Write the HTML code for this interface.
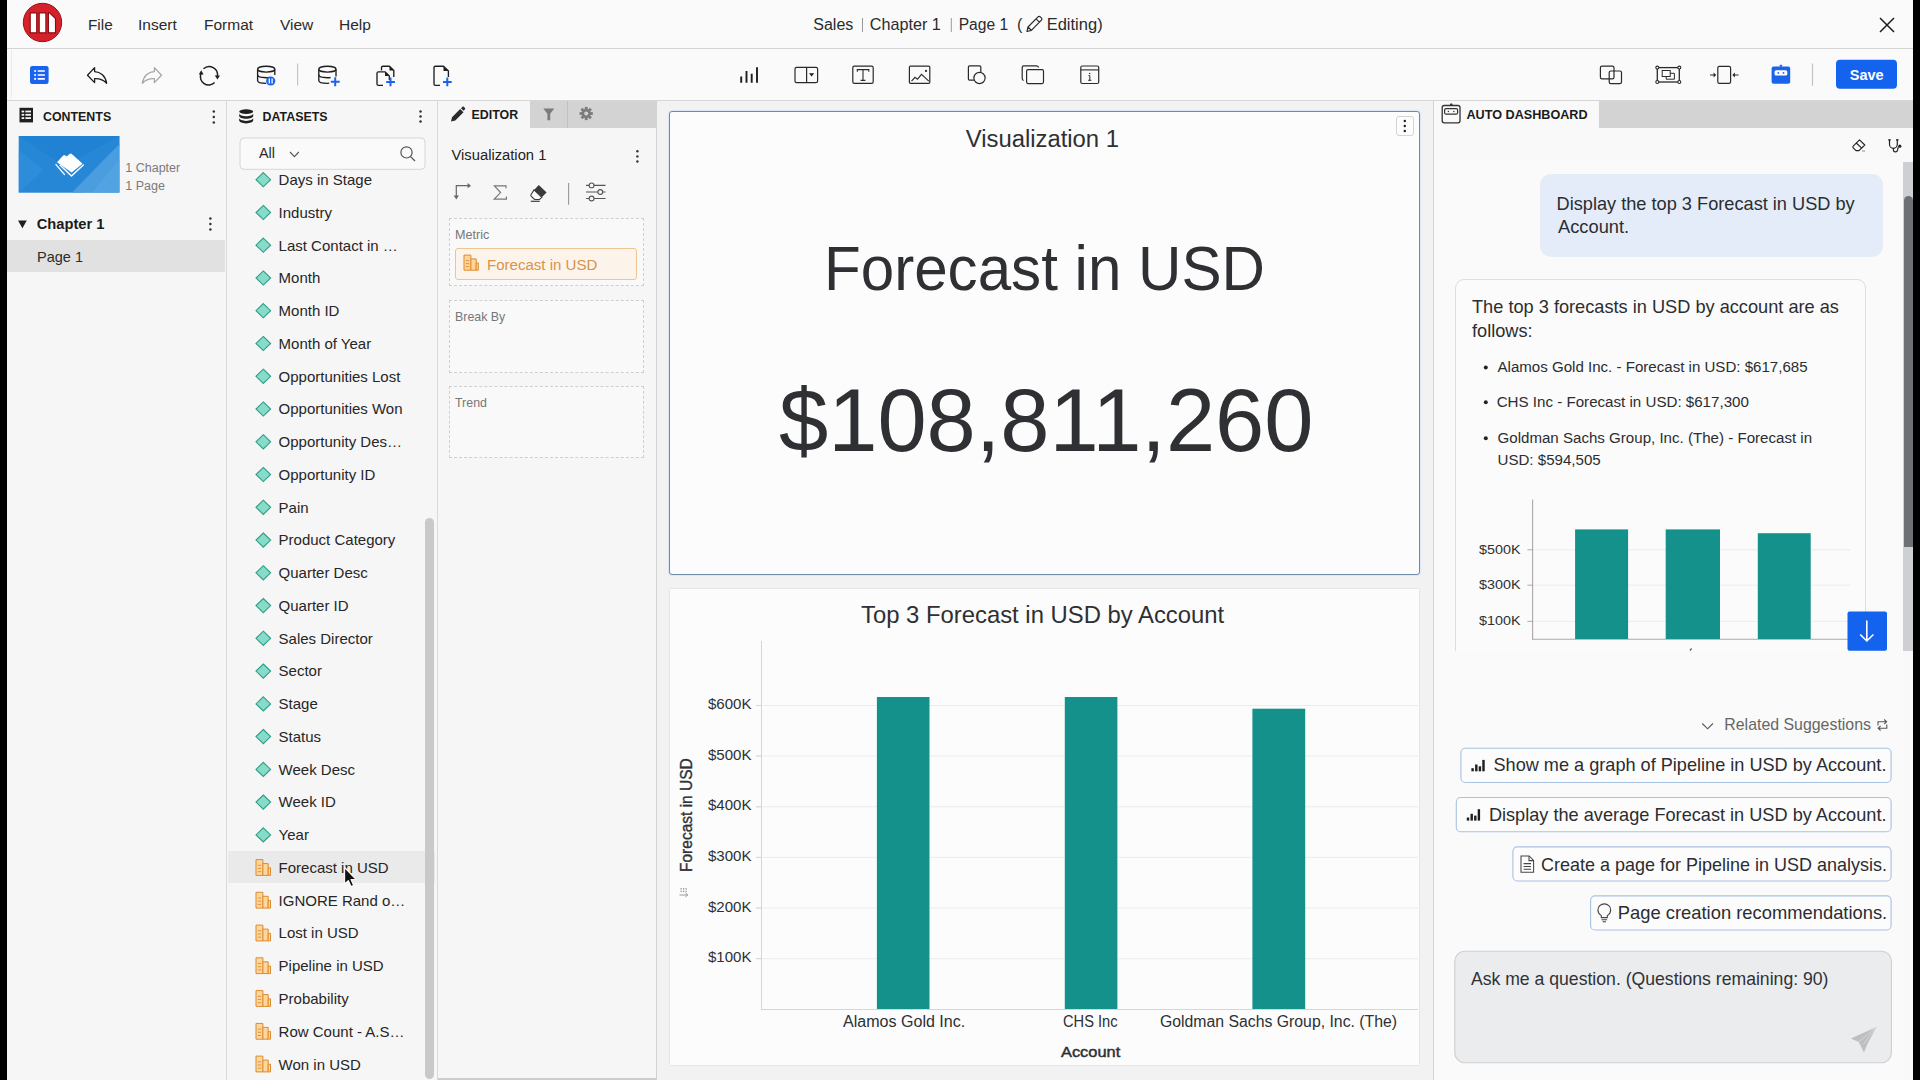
<!DOCTYPE html>
<html><head><meta charset="utf-8">
<style>
*{box-sizing:border-box;margin:0;padding:0}
html,body{width:1920px;height:1080px;overflow:hidden;background:#f3f3f3;font-family:"Liberation Sans",sans-serif;color:#222;position:relative}
.a{position:absolute;white-space:nowrap}
.t{position:absolute;white-space:nowrap;line-height:1}
svg.a{overflow:visible}
</style></head>
<body>
<!-- header -->
<div class="a" style="left:0;top:0;width:1920px;height:49px;background:#fafafa;border-bottom:1px solid #d5d5d5"></div>
<!-- toolbar -->
<div class="a" style="left:0;top:49px;width:1920px;height:52px;background:#fafafa;border-bottom:1px solid #d6d6d6;box-shadow:0 1px 2px rgba(0,0,0,.08)"></div><div class="a" style="left:10.5px;top:50px;width:1px;height:49px;background:#ececec"></div>
<!-- panels -->
<div class="a" style="left:0;top:101px;width:227px;height:979px;background:#f6f6f6;border-right:1px solid #dadada"></div>
<div class="a" style="left:227px;top:101px;width:211px;height:979px;background:#f6f6f6;border-right:1px solid #dadada"></div>
<div class="a" style="left:438px;top:101px;width:219px;height:979px;background:#f6f6f6;border-right:1.5px solid #d2d2d2"></div>
<div class="a" style="left:1433px;top:101px;width:480px;height:979px;background:#f9f9f9;border-left:1px solid #d4d4d4"></div>
<div class="t" style="left:88px;top:17px;font-size:15.3px;color:#2b2b2b">File</div>
<div class="t" style="left:138px;top:17px;font-size:15.5px;color:#2b2b2b">Insert</div>
<div class="t" style="left:204px;top:17px;font-size:15.5px;color:#2b2b2b">Format</div>
<div class="t" style="left:280px;top:17px;font-size:15.5px;color:#2b2b2b">View</div>
<div class="t" style="left:339px;top:17px;font-size:15.5px;color:#2b2b2b">Help</div>
<div class="t" style="left:813.3px;top:17px;font-size:16px;color:#2b2b2b">Sales</div>
<div class="t" style="left:869.7px;top:16px;font-size:16.2px;color:#2b2b2b">Chapter 1</div>
<div class="t" style="left:958.7px;top:17px;font-size:15.6px;color:#2b2b2b">Page 1</div>
<div class="t" style="left:1017px;top:17px;font-size:16px;color:#2b2b2b">(</div>
<div class="t" style="left:1046.7px;top:16px;font-size:16.5px;color:#2b2b2b">Editing)</div>
<svg class="a" style="left:0;top:0" width="1920" height="100">
  <circle cx="42.5" cy="22.5" r="19.2" fill="#d7212a" stroke="#9a1016" stroke-width="1"/>
  <g fill="#fff" stroke="#8a0c12" stroke-width="1.15" stroke-linejoin="miter">
   <path d="M30.2 12.9H36.7V32.8H30.2Z"/><path d="M39.2 12.9H45.9V32.8H39.2Z"/><path d="M48.4 12.9H49.6L55.5 18.6V32.8H48.4Z"/>
  </g>
  <path d="M1880 18L1894 32M1894 18L1880 32" stroke="#1e1e1e" stroke-width="1.5"/>
  <line x1="862.5" y1="18" x2="862.5" y2="32" stroke="#9a9a9a" stroke-width="1"/>
  <line x1="951.3" y1="18" x2="951.3" y2="32" stroke="#9a9a9a" stroke-width="1"/>
  <g fill="none" stroke="#2b2b2b" stroke-width="1.2" stroke-linejoin="round">
    <path d="M1027 31.5l1-4.5l10-10.2a1.6 1.6 0 0 1 2.3 0l1.1 1.1a1.6 1.6 0 0 1 0 2.3l-10 10.2z M1036 18.8l3.4 3.4 M1028 27l3.5 3.5"/>
  </g>
</svg>
<svg class="a" style="left:0;top:0" width="1920" height="100">
 <!-- blue list -->
 <rect x="30" y="66" width="18.6" height="18" rx="2.2" fill="#1a63ee"/>
 <g fill="#fff"><circle cx="35.1" cy="71" r="1.05"/><circle cx="35.1" cy="75" r="1.05"/><circle cx="35.1" cy="78.9" r="1.05"/></g>
 <g stroke="#fff" stroke-width="1.6" stroke-linecap="round"><path d="M38.3 71H44.3M38.3 75H44.3M38.3 78.9H44.3"/></g>
 <!-- undo -->
 <path d="M87.5 75.2L94.6 67.6V71.6C100.5 71.8 105.6 76 106.6 83.4C103.3 79.4 99.6 78.4 94.6 78.6V82.6Z" fill="none" stroke="#1e1e1e" stroke-width="1.3" stroke-linejoin="round"/>
 <!-- redo -->
 <path d="M161.5 75.2L154.4 67.6V71.6C148.5 71.8 143.4 76 142.4 83.4C145.7 79.4 149.4 78.4 154.4 78.6V82.6Z" fill="none" stroke="#a8a8a8" stroke-width="1.3" stroke-linejoin="round"/>
 <!-- refresh -->
 <g fill="none" stroke="#1e1e1e" stroke-width="1.5">
  <path d="M203.5 68.8A8.3 8.3 0 0 1 217.3 76.5"/>
  <path d="M214.6 82.5A8.3 8.3 0 0 1 201 73.5"/>
 </g>
 <path d="M214.8 75.5L220 75.5L217.4 79.5Z" fill="#1e1e1e"/>
 <path d="M198.8 74.5L203.6 74.5L201.2 70.3Z" fill="#1e1e1e"/>
 <!-- db info -->
 <g fill="none" stroke="#1e1e1e" stroke-width="1.35">
  <ellipse cx="266.2" cy="69.2" rx="8.6" ry="2.9"/>
  <path d="M257.6 69.2V80.4C257.6 82 261 83.3 266.2 83.3"/>
  <path d="M274.8 69.2V75"/>
  <path d="M257.6 74.8C257.6 76.4 261 77.7 266.2 77.7C267.5 77.7 268.6 77.6 269.5 77.4"/>
 </g>
 <circle cx="270.7" cy="81" r="4.6" fill="#1a63ee"/>
 <g stroke="#fff" stroke-width="1.3"><path d="M269.3 78.5V83.5M272.1 78.5V83.5"/></g>
 <line x1="297.6" y1="63.5" x2="297.6" y2="85.5" stroke="#c4c4c4" stroke-width="1.2"/>
 <!-- db plus -->
 <g fill="none" stroke="#1e1e1e" stroke-width="1.35">
  <ellipse cx="327.4" cy="69.2" rx="8.6" ry="2.9"/>
  <path d="M318.8 69.2V80.4C318.8 82 322.2 83.3 327.4 83.3C328 83.3 328.6 83.3 329.2 83.2"/>
  <path d="M336 69.2V76.5"/>
  <path d="M318.8 74.8C318.8 76.4 322.2 77.7 327.4 77.7C328.6 77.7 329.7 77.6 330.6 77.5"/>
 </g>
 <g stroke="#1a63ee" stroke-width="2"><path d="M335.2 77.3V86.3M330.8 81.8H339.7"/></g>
 <!-- copy plus -->
 <g fill="none" stroke="#1e1e1e" stroke-width="1.35" stroke-linejoin="round">
  <path d="M381.5 70.5V67.6C381.5 66.8 382.1 66.2 382.9 66.2H389.5L393.8 70.5V77"/>
  <path d="M377 84V73.2C377 72.4 377.6 71.8 378.4 71.8H385L389.3 76.1V80"/>
  <path d="M377 84C377 84.8 377.6 85.4 378.4 85.4H383"/>
 </g>
 <path d="M385 71.8L389.3 76.1H385Z M389.5 66.2L393.8 70.5H389.5Z" fill="#1e1e1e"/>
 <g stroke="#1a63ee" stroke-width="2"><path d="M390.5 77.5V86.3M386.2 81.9H394.9"/></g>
 <!-- page plus -->
 <g fill="none" stroke="#1e1e1e" stroke-width="1.35" stroke-linejoin="round">
  <path d="M434 84V67.6C434 66.8 434.6 66.2 435.4 66.2H443.5L448.4 71.1V77"/>
  <path d="M434 84C434 84.8 434.6 85.4 435.4 85.4H440"/>
 </g>
 <path d="M443.5 66.2L448.4 71.1H443.5Z" fill="#1e1e1e"/>
 <g stroke="#1a63ee" stroke-width="2"><path d="M447.3 77.5V86.3M443 81.9H451.7"/></g>

 <!-- center: bars -->
 <g stroke="#1e1e1e" stroke-width="1.9"><path d="M741.2 76.4V82.8M746.5 71V82.8M751.7 73.8V82.8M757 67.2V82.8"/></g>
 <!-- panel dropdown -->
 <rect x="795" y="67.4" width="22.6" height="15.3" rx="1.6" fill="none" stroke="#2a2a2a" stroke-width="1.2"/>
 <line x1="806.6" y1="67.4" x2="806.6" y2="82.7" stroke="#2a2a2a" stroke-width="1.2"/>
 <path d="M809 73.3h5.2l-2.6 3.3z" fill="#1e1e1e"/>
 <!-- T box -->
 <rect x="852.8" y="66.1" width="20.4" height="17.3" rx="1.6" fill="none" stroke="#2a2a2a" stroke-width="1.2"/>
 <path d="M857.3 71.8V69.6H868.8V71.8M863 69.6V80.4M860.6 80.4H865.4" fill="none" stroke="#2a2a2a" stroke-width="1.1"/>
 <!-- image -->
 <rect x="909.4" y="66.1" width="20.4" height="17.3" rx="1.2" fill="none" stroke="#2a2a2a" stroke-width="1.2"/>
 <path d="M911.5 81.2L915 77.3L917.5 79.2L921.5 74.4L928.8 81.2" fill="none" stroke="#2a2a2a" stroke-width="1.1"/>
 <circle cx="926" cy="70.9" r="1.1" fill="#2a2a2a"/>
 <!-- shape -->
 <path d="M974.5 80.2H969.6C968.9 80.2 968.4 79.7 968.4 79V67C968.4 66.3 968.9 65.8 969.6 65.8H979.6C980.3 65.8 980.8 66.3 980.8 67V72.4" fill="none" stroke="#2a2a2a" stroke-width="1.2"/>
 <circle cx="979.5" cy="78" r="5.6" fill="#fafafa" stroke="#2a2a2a" stroke-width="1.2"/>
 <!-- duplicate -->
 <path d="M1023.6 80.5C1022.6 80 1022.2 79.3 1022.2 78.4V67.4C1022.2 66.5 1022.9 65.8 1023.8 65.8H1036.4C1037.3 65.8 1038.2 66.5 1038.8 67.4" fill="none" stroke="#2a2a2a" stroke-width="1.2"/>
 <rect x="1026.6" y="69.6" width="16.9" height="14" rx="1.5" fill="none" stroke="#2a2a2a" stroke-width="1.2"/>
 <!-- info -->
 <rect x="1080.8" y="66" width="17.9" height="17.5" rx="1.5" fill="none" stroke="#2a2a2a" stroke-width="1.2"/>
 <line x1="1080.8" y1="69.9" x2="1098.7" y2="69.9" stroke="#2a2a2a" stroke-width="1.1"/>
 <circle cx="1089.7" cy="73.5" r="0.75" fill="#2a2a2a"/>
 <path d="M1088.5 75.6H1089.8V80.3M1088.2 80.3H1091.3" fill="none" stroke="#2a2a2a" stroke-width="1"/>

 <!-- right: overlap squares -->
 <rect x="1600.4" y="66.2" width="13.6" height="12.6" rx="1.6" fill="none" stroke="#2a2a2a" stroke-width="1.2"/>
 <rect x="1609.2" y="71" width="12.3" height="12.6" rx="1.6" fill="none" stroke="#2a2a2a" stroke-width="1.2"/>
 <!-- frame -->
 <rect x="1657.3" y="67.6" width="22" height="14.4" fill="none" stroke="#2a2a2a" stroke-width="1.3"/>
 <g fill="#fafafa" stroke="#2a2a2a" stroke-width="1.1"><circle cx="1657.3" cy="67.6" r="1.5"/><circle cx="1679.3" cy="67.6" r="1.5"/><circle cx="1657.3" cy="82" r="1.5"/><circle cx="1679.3" cy="82" r="1.5"/></g>
 <rect x="1662.2" y="70.5" width="8" height="6" fill="none" stroke="#2a2a2a" stroke-width="1"/>
 <path d="M1670.2 73.3H1674.4V79.2H1666.2V76.5" fill="none" stroke="#2a2a2a" stroke-width="1"/>
 <!-- arrows phone -->
 <rect x="1717.8" y="66.3" width="12.8" height="17" rx="1.6" fill="none" stroke="#2a2a2a" stroke-width="1.2"/>
 <path d="M1710 75H1714.5M1738.5 75H1734" stroke="#2a2a2a" stroke-width="1.2"/>
 <path d="M1713.6 72.6L1716.2 75L1713.6 77.4Z M1734.9 72.6L1732.3 75L1734.9 77.4Z" fill="#2a2a2a"/>
 <!-- robot -->
 <rect x="1771.6" y="66.4" width="18.6" height="17.3" rx="2" fill="#1a63ee"/>
 <rect x="1779.6" y="64.7" width="2.6" height="2" rx="0.8" fill="#1a63ee"/>
 <rect x="1774.5" y="70.3" width="12.8" height="5.2" rx="1.6" fill="#fff"/>
 <g fill="#1a63ee"><circle cx="1778.3" cy="72.9" r="0.9"/><circle cx="1783.5" cy="72.9" r="0.9"/></g>
 <line x1="1812.5" y1="63.5" x2="1812.5" y2="85.8" stroke="#c4c4c4" stroke-width="1.2"/>
 <!-- save -->
 <rect x="1836" y="59.8" width="61" height="29" rx="4" fill="#1463ee"/>
</svg>
<div class="t" style="left:1849.8px;top:68px;font-size:14.5px;font-weight:bold;color:#fff">Save</div>
<svg class="a" style="left:0;top:100px" width="227" height="200" viewBox="0 100 227 200">
 <rect x="19.5" y="107.8" width="13.5" height="14.6" fill="#1f1f1f" />
 <g fill="#f4f4f4"><rect x="21.6" y="110.6" width="2.6" height="1.8"/><rect x="25.4" y="110.6" width="5.6" height="1.8"/>
 <rect x="21.6" y="113.9" width="2.6" height="1.8"/><rect x="25.4" y="113.9" width="5.6" height="1.8"/>
 <rect x="21.6" y="117.2" width="2.6" height="1.8"/><rect x="25.4" y="117.2" width="5.6" height="1.8"/></g>
 <g fill="#333"><circle cx="213.8" cy="111.5" r="1.25"/><circle cx="213.8" cy="117" r="1.25"/><circle cx="213.8" cy="122.5" r="1.25"/></g>
 <!-- thumbnail -->
 <rect x="18.8" y="136" width="100.6" height="56.6" fill="#2a8ad9"/>
 <path d="M18.8 136H119.4V145.5L82 192.6H18.8Z" fill="#2586d6" opacity="0.6"/>
 <path d="M18.8 136H119.4L64 166Z" fill="#1f80d3" opacity="0.7"/>
 <path d="M18.8 150L44 170L18.8 192.6Z" fill="#2f8edb" opacity="0.8"/>
 <path d="M119.4 144L119.4 192.6H72Z" fill="#4a9ee0"/>
 <path d="M119.4 160L119.4 192.6H92Z" fill="#56a5e3" opacity="0.7"/>
 <!-- book icon -->
 <path d="M57 162.3L63.2 155.6Q64.2 154.5 65.3 155.4L66.6 156.5L69.6 153.9Q70.7 153 71.8 154L82.6 163.8L71.6 172.6Z" fill="#fff"/>
 <path d="M56 164.6L64.4 174.4" stroke="#fff" stroke-width="1.4" fill="none" stroke-linecap="round"/>
 <path d="M60.2 165.2L71.5 175.9L83.3 165" stroke="#fff" stroke-width="1.4" fill="none" stroke-linecap="round" stroke-linejoin="round"/>
 <!-- chapter triangle -->
 <path d="M18 220.5H26.8L22.4 228.2Z" fill="#1f1f1f"/>
 <g fill="#333"><circle cx="210.4" cy="218.5" r="1.25"/><circle cx="210.4" cy="224" r="1.25"/><circle cx="210.4" cy="229.4" r="1.25"/></g>
</svg>
<div class="t" style="left:43px;top:111px;font-size:12.4px;font-weight:bold;color:#1b1b1b">CONTENTS</div>
<div class="t" style="left:125.3px;top:162px;font-size:12.5px;color:#7a7a7a">1 Chapter</div>
<div class="t" style="left:125.3px;top:180px;font-size:12.5px;color:#7a7a7a">1 Page</div>
<div class="a" style="left:7px;top:240px;width:218px;height:32px;background:#e1e1e1"></div>
<div class="t" style="left:36.7px;top:217px;font-size:14.7px;font-weight:bold;color:#1b1b1b">Chapter 1</div>
<div class="t" style="left:37px;top:250px;font-size:14.5px;color:#2b2b2b">Page 1</div>
<div class="a" style="left:0;top:0;width:7px;height:1080px;background:#000"></div>
<div class="a" style="left:1913px;top:0;width:7px;height:1080px;background:#000"></div>
<div class="a" style="left:228px;top:851.3px;width:207px;height:31.7px;background:#eaeaea"></div>
<div class="a" style="left:424.5px;top:518px;width:9.5px;height:561px;border-radius:5px;background:#c9c9c9"></div>
<div class="t" style="left:278.6px;top:172px;font-size:15px;color:#262626">Days in Stage</div>
<div class="t" style="left:278.6px;top:205px;font-size:15px;color:#262626">Industry</div>
<div class="t" style="left:278.6px;top:238px;font-size:15px;color:#262626">Last Contact in …</div>
<div class="t" style="left:278.6px;top:270px;font-size:15px;color:#262626">Month</div>
<div class="t" style="left:278.6px;top:303px;font-size:15px;color:#262626">Month ID</div>
<div class="t" style="left:278.6px;top:336px;font-size:15px;color:#262626">Month of Year</div>
<div class="t" style="left:278.6px;top:369px;font-size:15px;color:#262626">Opportunities Lost</div>
<div class="t" style="left:278.6px;top:401px;font-size:15px;color:#262626">Opportunities Won</div>
<div class="t" style="left:278.6px;top:434px;font-size:15px;color:#262626">Opportunity Des…</div>
<div class="t" style="left:278.6px;top:467px;font-size:15px;color:#262626">Opportunity ID</div>
<div class="t" style="left:278.6px;top:500px;font-size:15px;color:#262626">Pain</div>
<div class="t" style="left:278.6px;top:532px;font-size:15px;color:#262626">Product Category</div>
<div class="t" style="left:278.6px;top:565px;font-size:15px;color:#262626">Quarter Desc</div>
<div class="t" style="left:278.6px;top:598px;font-size:15px;color:#262626">Quarter ID</div>
<div class="t" style="left:278.6px;top:631px;font-size:15px;color:#262626">Sales Director</div>
<div class="t" style="left:278.6px;top:663px;font-size:15px;color:#262626">Sector</div>
<div class="t" style="left:278.6px;top:696px;font-size:15px;color:#262626">Stage</div>
<div class="t" style="left:278.6px;top:729px;font-size:15px;color:#262626">Status</div>
<div class="t" style="left:278.6px;top:762px;font-size:15px;color:#262626">Week Desc</div>
<div class="t" style="left:278.6px;top:794px;font-size:15px;color:#262626">Week ID</div>
<div class="t" style="left:278.6px;top:827px;font-size:15px;color:#262626">Year</div>
<div class="t" style="left:278.6px;top:860px;font-size:15px;color:#262626">Forecast in USD</div>
<div class="t" style="left:278.6px;top:893px;font-size:15px;color:#262626">IGNORE Rand o…</div>
<div class="t" style="left:278.6px;top:925px;font-size:15px;color:#262626">Lost in USD</div>
<div class="t" style="left:278.6px;top:958px;font-size:15px;color:#262626">Pipeline in USD</div>
<div class="t" style="left:278.6px;top:991px;font-size:15px;color:#262626">Probability</div>
<div class="t" style="left:278.6px;top:1024px;font-size:15px;color:#262626">Row Count - A.S…</div>
<div class="t" style="left:278.6px;top:1057px;font-size:15px;color:#262626">Won in USD</div>
<svg class="a" style="left:0;top:0" width="1920" height="1080">
<g fill="#1f1f1f">
 <ellipse cx="246.2" cy="111.6" rx="7" ry="2.4"/>
 <path d="M239.2 113.4C239.2 115 242.3 116.2 246.2 116.2C250.1 116.2 253.2 115 253.2 113.4V116C253.2 117.6 250.1 118.8 246.2 118.8C242.3 118.8 239.2 117.6 239.2 116Z"/>
 <path d="M239.2 118.1C239.2 119.7 242.3 120.9 246.2 120.9C250.1 120.9 253.2 119.7 253.2 118.1V120.6C253.2 122.2 250.1 123.4 246.2 123.4C242.3 123.4 239.2 122.2 239.2 120.6Z"/>
</g>
<g fill="#333"><circle cx="420.5" cy="111.4" r="1.25"/><circle cx="420.5" cy="116.4" r="1.25"/><circle cx="420.5" cy="121.4" r="1.25"/></g>
<rect x="240" y="138" width="185" height="31.3" rx="4" fill="#fafafa" stroke="#d6d6d6" stroke-width="1"/>
<path d="M290 152L294.4 156.6L298.8 152" fill="none" stroke="#555" stroke-width="1.1"/>
<circle cx="406.5" cy="152.4" r="5.6" fill="none" stroke="#555" stroke-width="1.2"/>
<path d="M410.6 156.6L415 161" stroke="#555" stroke-width="1.3"/>

<path d="M263.3 172.6L270.6 179.7L263.3 186.8L256 179.7Z" fill="#86dcc8" stroke="#2e9e86" stroke-width="1.1"/>
<path d="M263.3 205.4L270.6 212.5L263.3 219.6L256 212.5Z" fill="#86dcc8" stroke="#2e9e86" stroke-width="1.1"/>
<path d="M263.3 238.1L270.6 245.2L263.3 252.3L256 245.2Z" fill="#86dcc8" stroke="#2e9e86" stroke-width="1.1"/>
<path d="M263.3 270.9L270.6 278.0L263.3 285.1L256 278.0Z" fill="#86dcc8" stroke="#2e9e86" stroke-width="1.1"/>
<path d="M263.3 303.6L270.6 310.7L263.3 317.8L256 310.7Z" fill="#86dcc8" stroke="#2e9e86" stroke-width="1.1"/>
<path d="M263.3 336.4L270.6 343.5L263.3 350.6L256 343.5Z" fill="#86dcc8" stroke="#2e9e86" stroke-width="1.1"/>
<path d="M263.3 369.2L270.6 376.3L263.3 383.4L256 376.3Z" fill="#86dcc8" stroke="#2e9e86" stroke-width="1.1"/>
<path d="M263.3 401.9L270.6 409.0L263.3 416.1L256 409.0Z" fill="#86dcc8" stroke="#2e9e86" stroke-width="1.1"/>
<path d="M263.3 434.7L270.6 441.8L263.3 448.9L256 441.8Z" fill="#86dcc8" stroke="#2e9e86" stroke-width="1.1"/>
<path d="M263.3 467.4L270.6 474.5L263.3 481.6L256 474.5Z" fill="#86dcc8" stroke="#2e9e86" stroke-width="1.1"/>
<path d="M263.3 500.2L270.6 507.3L263.3 514.4L256 507.3Z" fill="#86dcc8" stroke="#2e9e86" stroke-width="1.1"/>
<path d="M263.3 533.0L270.6 540.1L263.3 547.2L256 540.1Z" fill="#86dcc8" stroke="#2e9e86" stroke-width="1.1"/>
<path d="M263.3 565.7L270.6 572.8L263.3 579.9L256 572.8Z" fill="#86dcc8" stroke="#2e9e86" stroke-width="1.1"/>
<path d="M263.3 598.5L270.6 605.6L263.3 612.7L256 605.6Z" fill="#86dcc8" stroke="#2e9e86" stroke-width="1.1"/>
<path d="M263.3 631.2L270.6 638.3L263.3 645.4L256 638.3Z" fill="#86dcc8" stroke="#2e9e86" stroke-width="1.1"/>
<path d="M263.3 664.0L270.6 671.1L263.3 678.2L256 671.1Z" fill="#86dcc8" stroke="#2e9e86" stroke-width="1.1"/>
<path d="M263.3 696.8L270.6 703.9L263.3 711.0L256 703.9Z" fill="#86dcc8" stroke="#2e9e86" stroke-width="1.1"/>
<path d="M263.3 729.5L270.6 736.6L263.3 743.7L256 736.6Z" fill="#86dcc8" stroke="#2e9e86" stroke-width="1.1"/>
<path d="M263.3 762.3L270.6 769.4L263.3 776.5L256 769.4Z" fill="#86dcc8" stroke="#2e9e86" stroke-width="1.1"/>
<path d="M263.3 795.0L270.6 802.1L263.3 809.2L256 802.1Z" fill="#86dcc8" stroke="#2e9e86" stroke-width="1.1"/>
<path d="M263.3 827.8L270.6 834.9L263.3 842.0L256 834.9Z" fill="#86dcc8" stroke="#2e9e86" stroke-width="1.1"/>
<g transform="translate(255.5 859.1)" fill="#fcd69c" stroke="#de8b2e" stroke-width="1"><path d="M0.5 0.5H7.4V16.3H0.5Z"/><path d="M7.4 4.5H12.7V16.3H7.4Z"/><path d="M12.7 8.7H15V16.3H12.7Z"/><path d="M2.3 6.2H5.6M2.3 9.4H5.6M2.3 12.6H5.6" stroke-width="0.9"/></g>
<g transform="translate(255.5 891.8)" fill="#fcd69c" stroke="#de8b2e" stroke-width="1"><path d="M0.5 0.5H7.4V16.3H0.5Z"/><path d="M7.4 4.5H12.7V16.3H7.4Z"/><path d="M12.7 8.7H15V16.3H12.7Z"/><path d="M2.3 6.2H5.6M2.3 9.4H5.6M2.3 12.6H5.6" stroke-width="0.9"/></g>
<g transform="translate(255.5 924.6)" fill="#fcd69c" stroke="#de8b2e" stroke-width="1"><path d="M0.5 0.5H7.4V16.3H0.5Z"/><path d="M7.4 4.5H12.7V16.3H7.4Z"/><path d="M12.7 8.7H15V16.3H12.7Z"/><path d="M2.3 6.2H5.6M2.3 9.4H5.6M2.3 12.6H5.6" stroke-width="0.9"/></g>
<g transform="translate(255.5 957.3)" fill="#fcd69c" stroke="#de8b2e" stroke-width="1"><path d="M0.5 0.5H7.4V16.3H0.5Z"/><path d="M7.4 4.5H12.7V16.3H7.4Z"/><path d="M12.7 8.7H15V16.3H12.7Z"/><path d="M2.3 6.2H5.6M2.3 9.4H5.6M2.3 12.6H5.6" stroke-width="0.9"/></g>
<g transform="translate(255.5 990.1)" fill="#fcd69c" stroke="#de8b2e" stroke-width="1"><path d="M0.5 0.5H7.4V16.3H0.5Z"/><path d="M7.4 4.5H12.7V16.3H7.4Z"/><path d="M12.7 8.7H15V16.3H12.7Z"/><path d="M2.3 6.2H5.6M2.3 9.4H5.6M2.3 12.6H5.6" stroke-width="0.9"/></g>
<g transform="translate(255.5 1022.9)" fill="#fcd69c" stroke="#de8b2e" stroke-width="1"><path d="M0.5 0.5H7.4V16.3H0.5Z"/><path d="M7.4 4.5H12.7V16.3H7.4Z"/><path d="M12.7 8.7H15V16.3H12.7Z"/><path d="M2.3 6.2H5.6M2.3 9.4H5.6M2.3 12.6H5.6" stroke-width="0.9"/></g>
<g transform="translate(255.5 1055.6)" fill="#fcd69c" stroke="#de8b2e" stroke-width="1"><path d="M0.5 0.5H7.4V16.3H0.5Z"/><path d="M7.4 4.5H12.7V16.3H7.4Z"/><path d="M12.7 8.7H15V16.3H12.7Z"/><path d="M2.3 6.2H5.6M2.3 9.4H5.6M2.3 12.6H5.6" stroke-width="0.9"/></g>
<path d="M344.6 867.5L344.6 884L348.3 880.6L351 886.6L353.6 885.4L351 879.5L356 879.3Z" fill="#111" stroke="#fff" stroke-width="1.1" stroke-linejoin="round"/>
</svg>
<div class="t" style="left:262.6px;top:111px;font-size:12.4px;font-weight:bold;color:#1b1b1b">DATASETS</div>
<div class="t" style="left:259px;top:146px;font-size:14.4px;color:#2b2b2b">All</div>
<div class="a" style="left:530px;top:101px;width:125.5px;height:27px;background:#d3d3d3"></div>
<div class="a" style="left:567px;top:101px;width:1px;height:27px;background:#c2c2c2"></div>
<div class="a" style="left:448.6px;top:218.3px;width:195px;height:67.9px;border:1px dashed #cfcfcf;background:#f9f9f9"></div>
<div class="a" style="left:448.6px;top:300.3px;width:195px;height:72.7px;border:1px dashed #cfcfcf;background:#f9f9f9"></div>
<div class="a" style="left:448.6px;top:385.6px;width:195px;height:72.4px;border:1px dashed #cfcfcf;background:#f9f9f9"></div>
<div class="a" style="left:455px;top:248.4px;width:182.2px;height:31.8px;border:1px solid #f0c490;border-radius:3px;background:#fcf4ea"></div>
<svg class="a" style="left:0;top:0" width="1920" height="1080">
 <!-- pencil -->
 <path d="M451 121.4L452 117.2L460.2 109L463.5 112.3L455.3 120.5Z M461 108.2L462.3 106.9C462.8 106.4 463.5 106.4 464 106.9L464.8 107.7C465.3 108.2 465.3 108.9 464.8 109.4L463.5 110.7Z" fill="#2b2b2b"/>
 <!-- funnel -->
 <path d="M543.3 108.4H554.3L550.2 113.8V120.2H547.4V113.8Z" fill="#7b7b7b"/>
 <!-- gear -->
 <g transform="translate(586.2 113.5)" fill="#7b7b7b">
  <circle r="4.6"/>
  <g id="teeth"><rect x="-1.4" y="-6.6" width="2.8" height="3" /><rect x="-1.4" y="3.6" width="2.8" height="3"/><rect x="-6.6" y="-1.4" width="3" height="2.8"/><rect x="3.6" y="-1.4" width="3" height="2.8"/></g>
  <g transform="rotate(45)"><rect x="-1.4" y="-6.6" width="2.8" height="3" /><rect x="-1.4" y="3.6" width="2.8" height="3"/><rect x="-6.6" y="-1.4" width="3" height="2.8"/><rect x="3.6" y="-1.4" width="3" height="2.8"/></g>
  <circle r="2" fill="#d3d3d3"/>
 </g>
 <g fill="#333"><circle cx="637.4" cy="151.3" r="1.2"/><circle cx="637.4" cy="156.4" r="1.2"/><circle cx="637.4" cy="161.5" r="1.2"/></g>
 <!-- pivot -->
 <g fill="none" stroke="#666" stroke-width="1.2"><path d="M456.3 197V185.7H469"/></g>
 <path d="M467.6 183.1L471 185.7L467.6 188.3Z M453.7 195.6L456.3 199.6L458.9 195.6Z" fill="#666"/>
 <!-- sigma -->
 <path d="M506 188.3V185.8H494.4L500.6 192.6L494.2 199.2H506.4V196.6" fill="none" stroke="#777" stroke-width="1.2"/>
 <!-- eraser -->
 <path d="M538.8 185.1L546.6 192.6L541.8 197.3L534 189.9Z" fill="#3a3a3a"/>
 <path d="M534 189.9L541.8 197.3L539.5 199.5H534.6L531.3 196.3C530.7 195.7 530.7 194.8 531.3 194.2Z" fill="#fafafa" stroke="#3a3a3a" stroke-width="1.1"/>
 <path d="M530.8 201.3H539.7" stroke="#3a3a3a" stroke-width="1.2"/>
 <line x1="568.6" y1="183" x2="568.6" y2="204.8" stroke="#999" stroke-width="1.1"/>
 <!-- sliders -->
 <g stroke="#555" stroke-width="1.1" fill="#f6f6f6">
  <path d="M586 185.4H605.5M586 192H605.5M586 198.5H605.5"/>
  <circle cx="591.6" cy="185.4" r="2.4"/><circle cx="600.3" cy="192" r="2.4"/><circle cx="591.6" cy="198.5" r="2.4"/>
 </g>
 <!-- pill icon -->
 <g transform="translate(463.5 254.6)" fill="#fcd69c" stroke="#de8b2e" stroke-width="1"><path d="M0.5 0.5H7.4V15.6H0.5Z"/><path d="M7.4 4.3H12.7V15.6H7.4Z"/><path d="M12.7 8.3H14.8V15.6H12.7Z"/><path d="M2.3 6H5.6M2.3 9H5.6M2.3 12H5.6" stroke-width="0.9"/></g>
</svg>
<div class="t" style="left:471.5px;top:109px;font-size:12.4px;font-weight:bold;color:#1b1b1b">EDITOR</div>
<div class="t" style="left:451.5px;top:148px;font-size:14.75px;color:#222">Visualization 1</div>
<div class="t" style="left:455px;top:229px;font-size:12.6px;color:#777">Metric</div>
<div class="t" style="left:487px;top:257px;font-size:15.05px;color:#d8924a">Forecast in USD</div>
<div class="t" style="left:455px;top:311px;font-size:12.4px;color:#777">Break By</div>
<div class="t" style="left:455px;top:397px;font-size:12.4px;color:#777">Trend</div>
<div class="a" style="left:438px;top:1077.5px;width:219px;height:2.5px;background:#cdcdcd"></div>
<div class="a" style="left:657.5px;top:101px;width:775.5px;height:979px;background:#f2f2f2"></div>
<div class="a" style="left:669px;top:111px;width:751px;height:463.5px;background:#fcfcfc;border:1.4px solid #6d8aa8;border-radius:3px;box-shadow:0 0 1px 1px rgba(200,225,255,.55)"></div>
<div class="a" style="left:1395.6px;top:116.4px;width:18.6px;height:19.2px;background:#fdfdfd;border:1px solid #d4d4d4;border-radius:3px"></div>
<svg class="a" style="left:0;top:0" width="1920" height="1080"><g fill="#222"><circle cx="1404.8" cy="121" r="1.2"/><circle cx="1404.8" cy="126" r="1.2"/><circle cx="1404.8" cy="131" r="1.2"/></g></svg>
<div class="t" style="left:965.7px;top:127px;font-size:23.85px;transform:scaleX(1.0);transform-origin:0 0;color:#2e3033">Visualization 1</div>
<div class="t" style="left:823.6px;top:237px;font-size:62.9px;transform:scaleX(0.956);transform-origin:0 0;color:#2e3033">Forecast in USD</div>
<div class="t" style="left:778.8px;top:376px;font-size:89.8px;transform:scaleX(0.985);transform-origin:0 0;color:#2e3033">$108,811,260</div>
<div class="a" style="left:669.8px;top:588.5px;width:749.5px;height:476px;background:#fcfcfc;box-shadow:0 0 1.5px rgba(0,0,0,.18)"></div>
<svg class="a" style="left:0;top:0" width="1920" height="1080">
<line x1="756" y1="958.7" x2="1418" y2="958.7" stroke="#ececec" stroke-width="1"/>
<line x1="756" y1="958.7" x2="761.5" y2="958.7" stroke="#d6d6d6" stroke-width="1"/>
<line x1="756" y1="908.0" x2="1418" y2="908.0" stroke="#ececec" stroke-width="1"/>
<line x1="756" y1="908.0" x2="761.5" y2="908.0" stroke="#d6d6d6" stroke-width="1"/>
<line x1="756" y1="857.4" x2="1418" y2="857.4" stroke="#ececec" stroke-width="1"/>
<line x1="756" y1="857.4" x2="761.5" y2="857.4" stroke="#d6d6d6" stroke-width="1"/>
<line x1="756" y1="806.8" x2="1418" y2="806.8" stroke="#ececec" stroke-width="1"/>
<line x1="756" y1="806.8" x2="761.5" y2="806.8" stroke="#d6d6d6" stroke-width="1"/>
<line x1="756" y1="756.1" x2="1418" y2="756.1" stroke="#ececec" stroke-width="1"/>
<line x1="756" y1="756.1" x2="761.5" y2="756.1" stroke="#d6d6d6" stroke-width="1"/>
<line x1="756" y1="705.5" x2="1418" y2="705.5" stroke="#ececec" stroke-width="1"/>
<line x1="756" y1="705.5" x2="761.5" y2="705.5" stroke="#d6d6d6" stroke-width="1"/>
<line x1="761.5" y1="641" x2="761.5" y2="1009.5" stroke="#d6d6d6" stroke-width="1"/>
<line x1="761" y1="1009.5" x2="1418" y2="1009.5" stroke="#d6d6d6" stroke-width="1"/>
<rect x="876.9" y="697" width="52.6" height="312" fill="#14918a"/>
<rect x="1064.8" y="697" width="52.6" height="312" fill="#14918a"/>
<rect x="1252.4" y="708.7" width="52.8" height="300.3" fill="#14918a"/>
<g fill="#999"><rect x="680.5" y="888" width="1.2" height="1.6"/><rect x="683" y="888" width="1.2" height="1.6"/><rect x="685.5" y="888" width="1.2" height="1.6"/><rect x="680.5" y="890.6" width="1.2" height="1.6"/><rect x="683" y="890.6" width="1.2" height="1.6"/><rect x="685.5" y="890.6" width="1.2" height="1.6"/></g>
<path d="M679.5 895H687.5M685.5 893L687.8 895L685.5 897" fill="none" stroke="#999" stroke-width="1"/>
</svg>
<div class="t" style="left:861.4px;top:603px;font-size:24.2px;transform:scaleX(0.986);transform-origin:0 0;color:#2e3033">Top 3 Forecast in USD by Account</div>
<div class="t" style="left:707.6px;top:950px;font-size:14.4px;transform:scaleX(1.046);transform-origin:0 0;color:#2e3033">$100K</div>
<div class="t" style="left:707.6px;top:900px;font-size:14.4px;transform:scaleX(1.046);transform-origin:0 0;color:#2e3033">$200K</div>
<div class="t" style="left:707.6px;top:849px;font-size:14.4px;transform:scaleX(1.046);transform-origin:0 0;color:#2e3033">$300K</div>
<div class="t" style="left:707.6px;top:798px;font-size:14.4px;transform:scaleX(1.046);transform-origin:0 0;color:#2e3033">$400K</div>
<div class="t" style="left:707.6px;top:748px;font-size:14.4px;transform:scaleX(1.046);transform-origin:0 0;color:#2e3033">$500K</div>
<div class="t" style="left:707.6px;top:697px;font-size:14.4px;transform:scaleX(1.046);transform-origin:0 0;color:#2e3033">$600K</div>
<div class="t" style="left:842.5px;top:1014px;font-size:15.8px;transform:scaleX(1.016);transform-origin:0 0;color:#2e3033">Alamos Gold Inc.</div>
<div class="t" style="left:1063.2px;top:1014px;font-size:15.8px;transform:scaleX(0.928);transform-origin:0 0;color:#2e3033">CHS Inc</div>
<div class="t" style="left:1160px;top:1014px;font-size:15.8px;transform:scaleX(1.0);transform-origin:0 0;color:#2e3033">Goldman Sachs Group, Inc. (The)</div>
<div class="t" style="left:1061.2px;top:1045px;font-size:14.9px;transform:scaleX(1.1);transform-origin:0 0;color:#2e3033;-webkit-text-stroke:0.45px #2e3033">Account</div>
<div class="t" style="left:678.5px;top:872px;font-size:15.6px;color:#2e3033;-webkit-text-stroke:0.35px #2e3033;transform:rotate(-90deg) scaleX(0.995);transform-origin:0 0">Forecast in USD</div>
<div class="a" style="left:1599px;top:101px;width:314px;height:27px;background:#d3d3d3"></div>
<div class="a" style="left:1434px;top:162px;width:469px;height:918px;background:#fafafa"></div>
<div class="a" style="left:1903px;top:162px;width:10px;height:489px;background:#cdcfd2"></div>
<div class="a" style="left:1903.5px;top:196px;width:9.5px;height:351px;background:#6d7074;border-radius:5px 5px 0 0"></div>
<div class="a" style="left:1539.6px;top:173.7px;width:343px;height:83.4px;background:#e3ecf8;border-radius:11px"></div>
<div class="a" style="left:1434px;top:162px;width:469px;height:489px;overflow:hidden"><div class="a" style="left:20.8px;top:116.5px;width:411.3px;height:420px;background:#fbfbfb;border:1px solid #dedede;border-radius:9px"></div></div>
<svg class="a" style="left:0;top:0" width="1920" height="1080">

 <!-- robot outline -->
 <rect x="1442.2" y="105.5" width="17.8" height="17.3" rx="2" fill="none" stroke="#333" stroke-width="1.3"/>
 <rect x="1450" y="103.6" width="2.6" height="2" rx="0.8" fill="#333"/>
 <rect x="1444.6" y="108.6" width="13" height="5.6" rx="1.5" fill="none" stroke="#333" stroke-width="1.2"/>
 <g fill="#333"><circle cx="1448.4" cy="111.4" r="0.75"/><circle cx="1453.8" cy="111.4" r="0.75"/></g>
 <!-- eraser -->
 <g fill="none" stroke="#222" stroke-width="1.1" stroke-linejoin="round">
  <path d="M1859.5 139.8L1864.8 145L1859 150.6H1856L1853.2 147.8C1852.7 147.3 1852.7 146.6 1853.2 146.1Z"/>
  <path d="M1856.2 143L1861.8 148.2"/>
 </g>
 <path d="M1862.5 151H1865" stroke="#222" stroke-width="1" stroke-dasharray="1 1"/>
 <!-- stethoscope -->
 <g fill="none" stroke="#222" stroke-width="1.2" stroke-linecap="round">
  <path d="M1889.5 140V144.2C1889.5 146.6 1891.3 148.3 1893.4 148.3C1895.5 148.3 1897.3 146.6 1897.3 144.2V140"/>
  <path d="M1893.4 148.3V149.8C1893.4 151.2 1894.3 151.9 1895.4 151.9C1896.6 151.9 1897.4 151.2 1897.6 149.8L1898.2 147.5"/>
 </g>
 <g fill="#222"><rect x="1888.3" y="139.2" width="2.4" height="1.4"/><rect x="1896.1" y="139.2" width="2.4" height="1.4"/><circle cx="1899.8" cy="146.2" r="1.6"/></g>
 <!-- bullets -->
 <g fill="#222"><circle cx="1485.8" cy="367.4" r="2"/><circle cx="1485.8" cy="402.3" r="2"/><circle cx="1485.8" cy="438.2" r="2"/></g>

<g>
<line x1="1533" y1="549.8" x2="1850" y2="549.8" stroke="#ececec" stroke-width="1"/>
<line x1="1527.4" y1="549.8" x2="1533" y2="549.8" stroke="#aaa" stroke-width="1"/>
<line x1="1533" y1="585.2" x2="1850" y2="585.2" stroke="#ececec" stroke-width="1"/>
<line x1="1527.4" y1="585.2" x2="1533" y2="585.2" stroke="#aaa" stroke-width="1"/>
<line x1="1533" y1="621.4" x2="1850" y2="621.4" stroke="#ececec" stroke-width="1"/>
<line x1="1527.4" y1="621.4" x2="1533" y2="621.4" stroke="#aaa" stroke-width="1"/>
<line x1="1532.6" y1="499.4" x2="1532.6" y2="639.5" stroke="#a8a8a8" stroke-width="1.1"/>
<line x1="1532" y1="639.3" x2="1850" y2="639.3" stroke="#a8a8a8" stroke-width="1.1"/>
<rect x="1575.1" y="529.4" width="53" height="109.6" fill="#14918a"/>
<rect x="1665.7" y="529.4" width="54.3" height="109.6" fill="#14918a"/>
<rect x="1757.8" y="533.2" width="52.9" height="105.8" fill="#14918a"/>
<path d="M1690 650.5L1691.5 648.5" stroke="#333" stroke-width="1.2"/>
</g>
<rect x="1847.5" y="611.5" width="39.5" height="39.2" rx="2" fill="#1463ee"/>
<path d="M1866.8 620.5V641M1860.2 634.5L1866.8 641L1873.4 634.5" fill="none" stroke="#fff" stroke-width="1.6"/>
<path d="M1702.3 723.5L1707.6 728.8L1712.9 723.5" fill="none" stroke="#555" stroke-width="1.1"/>
<g fill="none" stroke="#555" stroke-width="1.1"><path d="M1878 725.5V721.8H1886.5M1884.2 719.5L1886.6 721.8L1884.2 724.1"/><path d="M1886.8 724.4V728.2H1878.2M1880.6 730.5L1878.2 728.2L1880.6 725.9"/></g>
<rect x="1460.9" y="748.2" width="430.1999999999998" height="34.3" rx="4.5" fill="#fcfcfc" stroke="#a8c2e3" stroke-width="1.1"/>
<rect x="1456.3" y="797.5" width="434.79999999999995" height="34.2" rx="4.5" fill="#fcfcfc" stroke="#a8c2e3" stroke-width="1.1"/>
<rect x="1512.9" y="846.9" width="378.1999999999998" height="34.1" rx="4.5" fill="#fcfcfc" stroke="#a8c2e3" stroke-width="1.1"/>
<rect x="1590.6" y="895.9" width="300.5" height="34.1" rx="4.5" fill="#fcfcfc" stroke="#a8c2e3" stroke-width="1.1"/>
<g fill="#1d1d1d"><rect x="1471.4" y="768.1999999999999" width="2.4" height="3.1"/><rect x="1475.1000000000001" y="764.5" width="2.4" height="6.8"/><rect x="1478.7" y="766.3" width="2.4" height="5"/><rect x="1482.3000000000002" y="759.9" width="2.4" height="11.4"/></g>
<g fill="#1d1d1d"><rect x="1466.8" y="817.5" width="2.4" height="3.1"/><rect x="1470.5" y="813.8000000000001" width="2.4" height="6.8"/><rect x="1474.1" y="815.6" width="2.4" height="5"/><rect x="1477.7" y="809.2" width="2.4" height="11.4"/></g>
<g fill="none" stroke="#444" stroke-width="1.05"><path d="M1521 856H1529.2L1533.6 860.4V872.2H1521Z"/><path d="M1529 856V860.6H1533.6"/><path d="M1523.6 863.6H1531M1523.6 866.4H1531M1523.6 869.2H1531"/></g>
<g fill="none" stroke="#444" stroke-width="1.1"><path d="M1601.3 917.6V915.6C1599.2 914.2 1597.9 912.2 1597.9 909.9C1597.9 906.3 1600.8 903.9 1604.3 903.9C1607.8 903.9 1610.7 906.3 1610.7 909.9C1610.7 912.2 1609.4 914.2 1607.3 915.6V917.6Z"/><path d="M1601.5 919.8H1607.1M1602.6 921.8H1606"/></g>
<rect x="1454.8" y="951.2" width="436.6" height="111.5" rx="10" fill="#ebecee" stroke="#cdced1" stroke-width="1.1"/>
<path d="M1876.5 1027L1850.8 1038.6L1858.8 1042L1864 1052.6L1867.2 1044.6Z" fill="#bdbfc3"/><path d="M1858.8 1042L1876.5 1027L1863.6 1044.2" fill="none" stroke="#d9dadd" stroke-width="0.8"/>
</svg>
<div class="t" style="left:1466.5px;top:109px;font-size:12.64px;font-weight:bold;color:#1b1b1b">AUTO DASHBOARD</div>
<div class="t" style="left:1556.5px;top:195px;font-size:18.19px;color:#2b2d31">Display the top 3 Forecast in USD by</div>
<div class="t" style="left:1558px;top:218px;font-size:18.3px;color:#2b2d31">Account.</div>
<div class="t" style="left:1472px;top:298px;font-size:18.2px;color:#2b2d31">The top 3 forecasts in USD by account are as</div>
<div class="t" style="left:1472px;top:322px;font-size:18.2px;color:#2b2d31">follows:</div>
<div class="t" style="left:1497.5px;top:359px;font-size:15.09px;color:#2b2d31">Alamos Gold Inc. - Forecast in USD: $617,685</div>
<div class="t" style="left:1496.7px;top:394px;font-size:15.13px;color:#2b2d31">CHS Inc - Forecast in USD: $617,300</div>
<div class="t" style="left:1497.5px;top:430px;font-size:15.1px;color:#2b2d31">Goldman Sachs Group, Inc. (The) - Forecast in</div>
<div class="t" style="left:1497.5px;top:452px;font-size:15.1px;color:#2b2d31">USD: $594,505</div>
<div class="t" style="left:1478.9px;top:543px;font-size:13.7px;transform:scaleX(1.05);transform-origin:0 0;color:#2e3033">$500K</div>
<div class="t" style="left:1478.9px;top:578px;font-size:13.7px;transform:scaleX(1.05);transform-origin:0 0;color:#2e3033">$300K</div>
<div class="t" style="left:1478.9px;top:614px;font-size:13.7px;transform:scaleX(1.05);transform-origin:0 0;color:#2e3033">$100K</div>
<div class="t" style="left:1724.3px;top:717px;font-size:15.9px;color:#666">Related Suggestions</div>
<div class="t" style="left:1493.5px;top:756px;font-size:18.14px;color:#2b2d31">Show me a graph of Pipeline in USD by Account.</div>
<div class="t" style="left:1488.9px;top:806px;font-size:18.17px;color:#2b2d31">Display the average Forecast in USD by Account.</div>
<div class="t" style="left:1541.1px;top:856px;font-size:17.99px;color:#2b2d31">Create a page for Pipeline in USD analysis.</div>
<div class="t" style="left:1617.8px;top:904px;font-size:18.36px;color:#2b2d31">Page creation recommendations.</div>
<div class="t" style="left:1470.9px;top:971px;font-size:17.64px;color:#303236">Ask me a question. (Questions remaining: 90)</div>

</body></html>
